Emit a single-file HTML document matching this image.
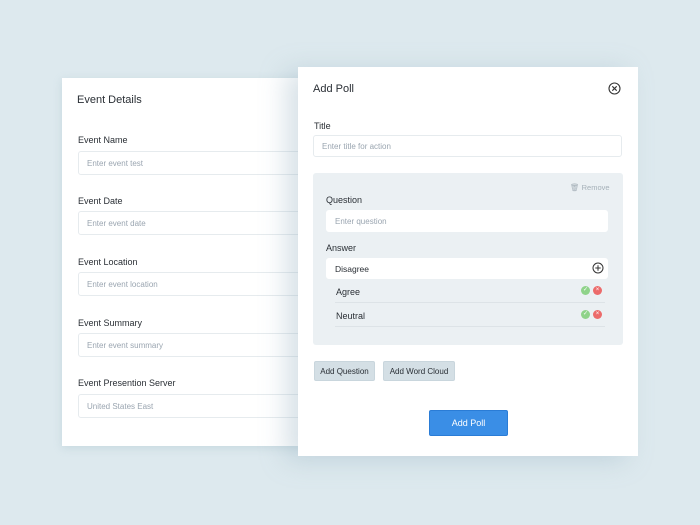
<!DOCTYPE html>
<html><head><style>
*{box-sizing:border-box;margin:0;padding:0}
body{width:700px;height:525px;background:#dde9ee;font-family:"Liberation Sans",sans-serif;position:relative;overflow:hidden}
.a{position:absolute}
.card{background:#fff}
.lbl{font-size:9px;color:#2a2f35}
.inp{border:1px solid #e6ebee;border-radius:3px;background:#fff;font-size:8px;color:#9aa5b0;padding-left:8px;display:flex;align-items:center}
.row{font-size:9px;color:#2a2f35}
.btn{background:#d4dfe5;border-radius:2px;font-size:8px;color:#2a2f35;display:flex;align-items:center;justify-content:center;border:1px solid #c9d6dd}
.dot{width:9px;height:9px;border-radius:50%;color:#fff;font-size:6px;line-height:9px;text-align:center}
</style></head><body>
<div class="a card" style="left:62px;top:78px;width:240px;height:368px;box-shadow:0 2px 8px rgba(150,180,190,.3)"></div>
<div class="a" style="left:77px;top:94px;font-size:11px;color:#2a2f35">Event Details</div>
<div class="a lbl" style="left:78px;top:135px">Event Name</div>
<div class="a inp" style="left:78px;top:151px;width:230px;height:24px">Enter event test</div>
<div class="a lbl" style="left:78px;top:196px">Event Date</div>
<div class="a inp" style="left:78px;top:211px;width:230px;height:24px">Enter event date</div>
<div class="a lbl" style="left:78px;top:257px">Event Location</div>
<div class="a inp" style="left:78px;top:272px;width:230px;height:24px">Enter event location</div>
<div class="a lbl" style="left:78px;top:318px">Event Summary</div>
<div class="a inp" style="left:78px;top:333px;width:230px;height:24px">Enter event summary</div>
<div class="a lbl" style="left:78px;top:378px">Event Presention Server</div>
<div class="a inp" style="left:78px;top:394px;width:230px;height:24px">United States East</div>

<div class="a card" style="left:298px;top:67px;width:340px;height:389px;box-shadow:-12px 4px 24px rgba(140,170,185,.35)"></div>
<div class="a" style="left:313px;top:83px;font-size:11px;color:#2a2f35">Add Poll</div>
<svg class="a" style="left:608px;top:82px" width="13" height="13" viewBox="0 0 13 13"><circle cx="6.5" cy="6.5" r="5.5" fill="none" stroke="#333" stroke-width="1.1"/><path d="M4.3 4.3l4.4 4.4M8.7 4.3l-4.4 4.4" stroke="#333" stroke-width="1.1"/></svg>
<div class="a lbl" style="left:314px;top:121px">Title</div>
<div class="a inp" style="left:313px;top:135px;width:309px;height:22px">Enter title for action</div>
<div class="a" style="left:313px;top:173px;width:310px;height:172px;background:#ebf0f3;border-radius:3px"></div>
<div class="a" style="left:570px;top:183px;font-size:7.5px;color:#a5b0b8">&#x1F5D1;&#xFE0E; Remove</div>
<div class="a lbl" style="left:326px;top:195px">Question</div>
<div class="a inp" style="left:326px;top:210px;width:282px;height:22px;border-color:#fff">Enter question</div>
<div class="a lbl" style="left:326px;top:243px">Answer</div>
<div class="a inp" style="left:326px;top:258px;width:282px;height:21px;border-color:#fff;color:#2a2f35;font-size:8.5px">Disagree</div>
<svg class="a" style="left:592px;top:262px" width="12" height="12" viewBox="0 0 12 12"><circle cx="6" cy="6" r="5" fill="none" stroke="#333" stroke-width="1"/><path d="M6 3.3v5.4M3.3 6h5.4" stroke="#333" stroke-width="1"/></svg>
<div class="a row" style="left:336px;top:287px">Agree</div>
<div class="a dot" style="left:581px;top:286px;background:#8fd38a">✓</div>
<div class="a dot" style="left:593px;top:286px;background:#ec6b6b">×</div>
<div class="a" style="left:335px;top:302px;width:270px;height:1px;background:#dde3e7"></div>
<div class="a row" style="left:336px;top:311px">Neutral</div>
<div class="a dot" style="left:581px;top:310px;background:#8fd38a">✓</div>
<div class="a dot" style="left:593px;top:310px;background:#ec6b6b">×</div>
<div class="a" style="left:335px;top:326px;width:270px;height:1px;background:#dde3e7"></div>
<div class="a btn" style="left:314px;top:361px;width:61px;height:20px">Add Question</div>
<div class="a btn" style="left:383px;top:361px;width:72px;height:20px">Add Word Cloud</div>
<div class="a" style="left:429px;top:410px;width:79px;height:26px;background:#3a8ee6;border:1px solid #2a7cd6;border-radius:2px;color:#fff;font-size:9px;display:flex;align-items:center;justify-content:center">Add Poll</div>
</body></html>
